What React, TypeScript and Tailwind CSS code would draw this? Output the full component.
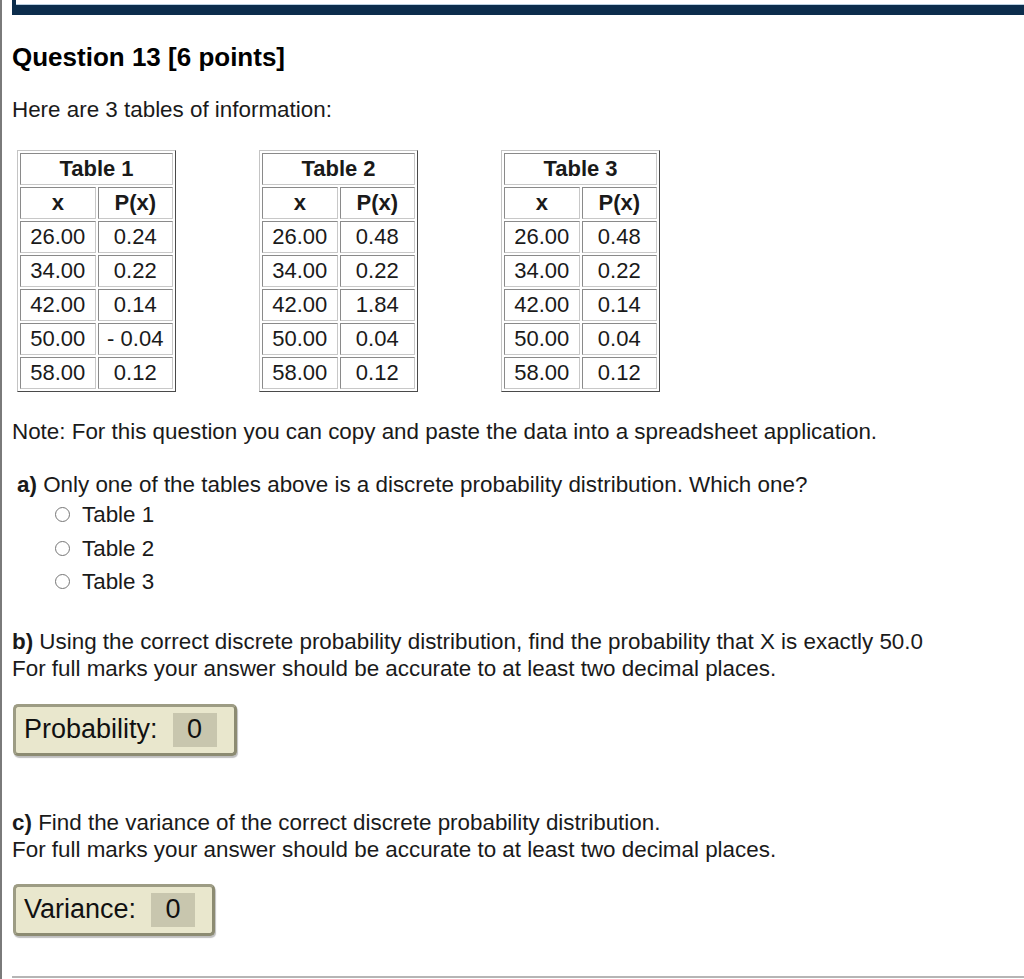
import React from 'react';

type Row = [string, string];

const tables: { title: string; rows: Row[] }[] = [
  {
    title: 'Table 1',
    rows: [['26.00', '0.24'], ['34.00', '0.22'], ['42.00', '0.14'], ['50.00', '- 0.04'], ['58.00', '0.12']],
  },
  {
    title: 'Table 2',
    rows: [['26.00', '0.48'], ['34.00', '0.22'], ['42.00', '1.84'], ['50.00', '0.04'], ['58.00', '0.12']],
  },
  {
    title: 'Table 3',
    rows: [['26.00', '0.48'], ['34.00', '0.22'], ['42.00', '0.14'], ['50.00', '0.04'], ['58.00', '0.12']],
  },
];

// cell with the old-school inset border look
const cellCls =
  'h-[32px] p-0 text-center border border-t-[#8a8a8a] border-l-[#8a8a8a] border-b-[#c8c8c8] border-r-[#c8c8c8]';

const DataTable = ({ title, rows }: { title: string; rows: Row[] }) => (
  <table className="w-[159px] border-separate border-spacing-[2px] border border-t-[#c4c4c4] border-l-[#c4c4c4] border-b-[#4a4a4a] border-r-[#4a4a4a] text-[22px] leading-[26px]">
    <tbody>
      <tr>
        <th colSpan={2} className={`${cellCls} font-bold`}>
          {title}
        </th>
      </tr>
      <tr>
        <th className={`${cellCls} w-[74px] font-bold`}>x</th>
        <th className={`${cellCls} w-[74px] font-bold`}>P(x)</th>
      </tr>
      {rows.map(([x, p]) => (
        <tr key={x}>
          <td className={cellCls}>{x}</td>
          <td className={cellCls}>{p}</td>
        </tr>
      ))}
    </tbody>
  </table>
);

const Radio = ({ label }: { label: string }) => (
  <label className="flex items-center h-[33.5px] pl-[43px]">
    <span className="w-[15px] h-[15px] rounded-full border border-[#767676] bg-white" />
    <span className="ml-[12px]">{label}</span>
  </label>
);

const AnswerBox = ({ label, width }: { label: string; width: string }) => (
  <div
    className={`ml-[1px] ${width} h-[52px] flex items-center rounded-[5px] border-[3px] border-[#8c8b72] border-t-[#9d9c84] border-l-[#9d9c84] bg-[#e9e7cd] shadow-[1px_2px_1px_rgba(0,0,0,0.25)] pl-[8px] text-[27px] text-[#111]`}
  >
    <span>{label}</span>
    <span className="ml-[15px] w-[44px] h-[34px] bg-[#c8c6ae] flex items-center justify-center">0</span>
  </div>
);

export default function App() {
  return (
    <div
      className="min-h-[979px] bg-white border-l-2 border-[#7a7a7a] text-[#1a1a1a] text-[22.4px] leading-[27px]"
      style={{ fontFamily: '"Liberation Sans", Arial, sans-serif' }}
    >
      {/* top navy bar */}
      <div className="ml-[10px] h-[15px] border-l-4 border-b-[10px] border-[#0c2d4c] bg-white">
        <div className="h-[4px]" />
        <div className="h-[1px] bg-[#b9cfe0]" />
      </div>

      <div className="pl-[10px]">
        <h1 className="mt-[27px] text-[26px] leading-[30px] font-bold text-black">Question 13 [6 points]</h1>

        <p className="mt-[24px]">Here are 3 tables of information:</p>

        <div className="mt-[27px] ml-[5px] flex gap-[83px]">
          {tables.map((t) => (
            <DataTable key={t.title} title={t.title} rows={t.rows} />
          ))}
        </div>

        <p className="mt-[26px]">Note: For this question you can copy and paste the data into a spreadsheet application.</p>

        <p className="mt-[26px] ml-[5px]">
          <b>a)</b> Only one of the tables above is a discrete probability distribution. Which one?
        </p>
        <div>
          <Radio label="Table 1" />
          <Radio label="Table 2" />
          <Radio label="Table 3" />
        </div>

        <p className="mt-[29px]">
          <b>b)</b> Using the correct discrete probability distribution, find the probability that X is exactly 50.0
          <br />
          For full marks your answer should be accurate to at least two decimal places.
        </p>

        <div className="mt-[22px]">
          <AnswerBox label="Probability:" width="w-[224px]" />
        </div>

        <p className="mt-[53px]">
          <b>c)</b> Find the variance of the correct discrete probability distribution.
          <br />
          For full marks your answer should be accurate to at least two decimal places.
        </p>

        <div className="mt-[21px]">
          <AnswerBox label="Variance:" width="w-[202px]" />
        </div>

        <div className="mt-[40px] border-t-2 border-[#b5b5b5]" />
      </div>
    </div>
  );
}
